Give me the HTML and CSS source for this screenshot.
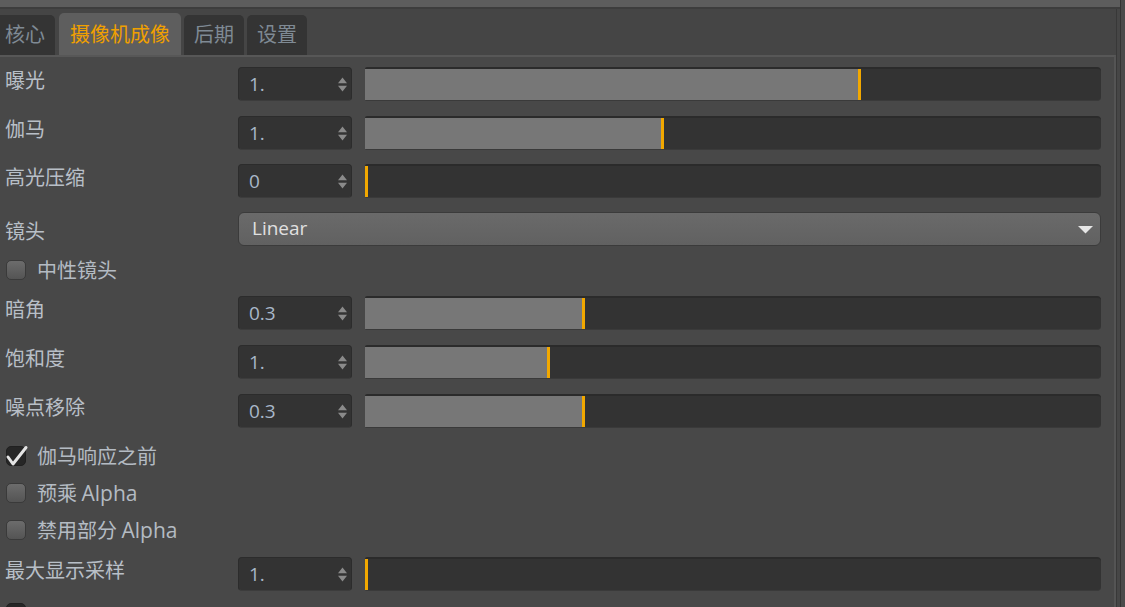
FILE: index.html
```html
<!DOCTYPE html>
<html lang="zh">
<head>
<meta charset="utf-8">
<link rel="stylesheet" href="styles.css">
</head>
<body>
<div class="window">
  <div class="topstrip"></div>
  <div class="main">
    <div class="content">
      <div class="tabs">
        <div class="tab first">核心</div>
        <div class="tab active">摄像机成像</div>
        <div class="tab">后期</div>
        <div class="tab">设置</div>
      </div>
      <div class="panel">
        <div class="row r-first">
          <div class="label">曝光</div>
          <div class="num"><span>1.</span><svg class="spin" width="9" height="15" viewBox="0 0 9 15"><path d="M0 6.3 L4.5 0.5 L9 6.3Z M0 8.7 L9 8.7 L4.5 14.5Z" fill="#8a8a8a"/></svg></div>
          <div class="track"><div class="fill" style="width:67.4%"></div></div>
        </div>
        <div class="row m15">
          <div class="label">伽马</div>
          <div class="num"><span>1.</span><svg class="spin" width="9" height="15" viewBox="0 0 9 15"><path d="M0 6.3 L4.5 0.5 L9 6.3Z M0 8.7 L9 8.7 L4.5 14.5Z" fill="#8a8a8a"/></svg></div>
          <div class="track"><div class="fill" style="width:40.6%"></div></div>
        </div>
        <div class="row m14">
          <div class="label">高光压缩</div>
          <div class="num"><span>0</span><svg class="spin" width="9" height="15" viewBox="0 0 9 15"><path d="M0 6.3 L4.5 0.5 L9 6.3Z M0 8.7 L9 8.7 L4.5 14.5Z" fill="#8a8a8a"/></svg></div>
          <div class="track"><div class="fill" style="width:0%"></div></div>
        </div>
        <div class="row m14">
          <div class="label dd-label">镜头</div>
          <div class="dropdown"><span>Linear</span><svg width="15" height="8" viewBox="0 0 15 8"><path d="M0 0 L15 0 L7.5 7.5Z" fill="#e6e6e6"/></svg></div>
        </div>
        <div class="check-row m14">
          <div class="box"></div>
          <div class="clabel">中性镜头</div>
        </div>
        <div class="row m16">
          <div class="label">暗角</div>
          <div class="num"><span>0.3</span><svg class="spin" width="9" height="15" viewBox="0 0 9 15"><path d="M0 6.3 L4.5 0.5 L9 6.3Z M0 8.7 L9 8.7 L4.5 14.5Z" fill="#8a8a8a"/></svg></div>
          <div class="track"><div class="fill" style="width:29.9%"></div></div>
        </div>
        <div class="row m15">
          <div class="label">饱和度</div>
          <div class="num"><span>1.</span><svg class="spin" width="9" height="15" viewBox="0 0 9 15"><path d="M0 6.3 L4.5 0.5 L9 6.3Z M0 8.7 L9 8.7 L4.5 14.5Z" fill="#8a8a8a"/></svg></div>
          <div class="track"><div class="fill" style="width:25.1%"></div></div>
        </div>
        <div class="row m15">
          <div class="label">噪点移除</div>
          <div class="num"><span>0.3</span><svg class="spin" width="9" height="15" viewBox="0 0 9 15"><path d="M0 6.3 L4.5 0.5 L9 6.3Z M0 8.7 L9 8.7 L4.5 14.5Z" fill="#8a8a8a"/></svg></div>
          <div class="track"><div class="fill" style="width:29.9%"></div></div>
        </div>
        <div class="check-row m18">
          <div class="box checked"><svg width="24" height="22" viewBox="0 0 24 22"><path d="M3 12 L8 19 L21 2.5" fill="none" stroke="#e4e4e4" stroke-width="3" stroke-linecap="round" stroke-linejoin="round"/></svg></div>
          <div class="clabel">伽马响应之前</div>
        </div>
        <div class="check-row m17">
          <div class="box"></div>
          <div class="clabel">预乘 <span class="lat">Alpha</span></div>
        </div>
        <div class="check-row m17">
          <div class="box"></div>
          <div class="clabel">禁用部分 <span class="lat">Alpha</span></div>
        </div>
        <div class="row m17">
          <div class="label">最大显示采样</div>
          <div class="num"><span>1.</span><svg class="spin" width="9" height="15" viewBox="0 0 9 15"><path d="M0 6.3 L4.5 0.5 L9 6.3Z M0 8.7 L9 8.7 L4.5 14.5Z" fill="#8a8a8a"/></svg></div>
          <div class="track"><div class="fill" style="width:0%"></div></div>
        </div>
        <div class="check-row m12">
          <div class="box checked"></div>
        </div>
      </div>
    </div>
    <div class="scrollcol"><div class="thumb"></div></div>
  </div>
</div>
</body>
</html>
```

FILE: styles.css
```css
* { box-sizing: border-box; }
html, body {
  margin: 0;
  padding: 0;
  width: 1125px;
  height: 607px;
  overflow: hidden;
  background: #474747;
  font-family: "Noto Sans CJK SC", "Open Sans", sans-serif;
}
.window {
  display: flex;
  flex-direction: column;
  height: 607px;
}
.topstrip {
  height: 9px;
  background: #5d5d5d;
  border-bottom: 2px solid #3d3d3d;
  flex: none;
}
.main {
  display: flex;
  flex: 1;
  min-height: 0;
}
.content {
  width: 1116px;
  flex: none;
  display: flex;
  flex-direction: column;
}
.tabs {
  height: 46px;
  display: flex;
  align-items: flex-end;
  gap: 3px;
  background: #454545;
  flex: none;
}
.tab {
  height: 40px;
  padding: 0 10px;
  background: #343434;
  color: #7f8a94;
  font-size: 20px;
  line-height: 38px;
  border-radius: 5px 5px 0 0;
  white-space: nowrap;
}
.tab.first {
  margin-left: -5px;
  margin-right: 1px;
}
.tab.active {
  height: 42px;
  line-height: 42px;
  background: #5e5e5e;
  color: #f0a000;
  padding: 0 11px 0 11px;
}
.panel {
  flex: 1;
  background: #484848;
  border-top: 2px solid #575757;
  border-right: 2px solid #545454;
  padding: 10px 13px 0 5px;
  display: flex;
  flex-direction: column;
}
.row {
  display: flex;
  align-items: flex-start;
  height: 34px;
  flex: none;
}
.m11 { margin-top: 11px; }
.m12 { margin-top: 12px; }
.m14 { margin-top: 14px; }
.m15 { margin-top: 15px; }
.m16 { margin-top: 16px; }
.m17 { margin-top: 17px; }
.m18 { margin-top: 18px; }
.label {
  width: 233px;
  flex: none;
  color: #b8bfc7;
  font-size: 20px;
  line-height: 26px;
  white-space: nowrap;
}
.dd-label {
  margin-top: 6px;
}
.num {
  width: 114px;
  height: 34px;
  flex: none;
  margin-right: 13px;
  background: #333333;
  border: 1px solid #2c2c2c;
  border-bottom-color: #3c3c3c;
  border-radius: 4px;
  display: flex;
  align-items: center;
  justify-content: space-between;
  padding: 0 4px 0 10px;
  color: #a9b8c9;
  font-family: "Open Sans", "Noto Sans", sans-serif;
  font-size: 19px;
}
.num span {
  line-height: 30px;
}
.track {
  flex: 1;
  height: 34px;
  background: #333333;
  border-top: 2px solid #2b2b2b;
  border-bottom: 1px solid #3a3a3a;
  border-radius: 2px 4px 4px 2px;
  display: flex;
}
.fill {
  height: 100%;
  min-width: 3px;
  background: #777777;
  border-right: 3px solid #f2a800;
  flex: none;
}
.dropdown {
  flex: 1;
  height: 34px;
  background: linear-gradient(#6a6a6a, #616161);
  border: 1px solid #3b3b3b;
  border-radius: 6px;
  display: flex;
  align-items: center;
  justify-content: space-between;
  padding: 0 7px 0 13px;
  color: #e0e0e0;
  font-family: "Open Sans", "Noto Sans", sans-serif;
  font-size: 19px;
}
.dropdown span {
  line-height: 30px;
  margin-top: -3px;
}
.dropdown svg {
  margin-top: 2px;
}
.check-row {
  display: flex;
  align-items: center;
  height: 20px;
  flex: none;
  gap: 11px;
  padding-left: 1px;
}
.box {
  width: 20px;
  height: 20px;
  flex: none;
  border-radius: 5px;
  background: linear-gradient(#6c6c6c, #545454);
  border: 1px solid #3a3a3a;
  position: relative;
}
.box.checked {
  background: #262626;
  border-color: #202020;
}
.box.checked svg {
  position: absolute;
  left: -2px;
  top: -2px;
}
.clabel {
  color: #b4bbc3;
  font-size: 20px;
  line-height: 24px;
  white-space: nowrap;
  font-family: "Noto Sans CJK SC", "Open Sans", sans-serif;
}
.lat {
  font-family: "Open Sans", sans-serif;
  font-size: 21px;
}
.scrollcol {
  flex: 1;
  background: #464646;
  border-left: 1px solid #383838;
  display: flex;
  padding-left: 3px;
}
.thumb {
  flex: 1;
  margin-top: -34px;
  background: #4b4b4b;
  border-left: 1px solid #343434;
  border-top: 1px solid #343434;
  border-radius: 5px 0 0 0;
}
```
